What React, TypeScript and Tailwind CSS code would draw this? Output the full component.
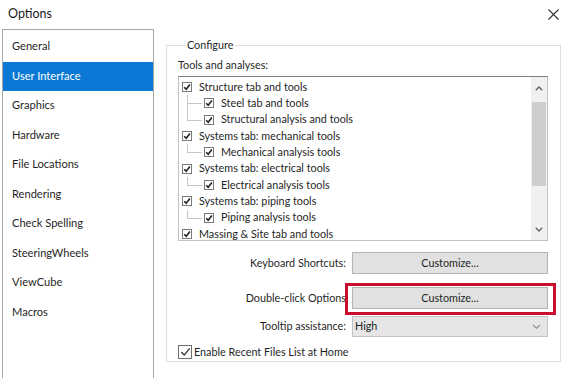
import React from "react";

const font = { fontFamily: 'Lato, "Open Sans", sans-serif' };

const nav = [
  "General",
  "User Interface",
  "Graphics",
  "Hardware",
  "File Locations",
  "Rendering",
  "Check Spelling",
  "SteeringWheels",
  "ViewCube",
  "Macros",
];

type Row = { t: string; child?: boolean; last?: boolean };
const rows: Row[] = [
  { t: "Structure tab and tools" },
  { t: "Steel tab and tools", child: true },
  { t: "Structural analysis and tools", child: true, last: true },
  { t: "Systems tab: mechanical tools" },
  { t: "Mechanical analysis tools", child: true, last: true },
  { t: "Systems tab: electrical tools" },
  { t: "Electrical analysis tools", child: true, last: true },
  { t: "Systems tab: piping tools" },
  { t: "Piping analysis tools", child: true, last: true },
  { t: "Massing & Site tab and tools" },
];

function Check({ size = 10 }: { size?: number }) {
  return (
    <span
      className="flex shrink-0 items-center justify-center border border-[#7a7a7a] bg-white"
      style={{ width: size, height: size }}
    >
      <svg width={size - 2} height={size - 2} viewBox="0 0 8 8">
        <path d="M1.2 4.2 L3.2 6.2 L6.9 1.6" fill="none" stroke="#222" strokeWidth="1.6" />
      </svg>
    </span>
  );
}

export default function App() {
  return (
    <div
      className="relative h-[378px] w-[570px] overflow-hidden bg-white text-[12px] text-[#1f1f1f]"
      style={font}
    >
      {/* Title bar */}
      <div className="flex h-[29px] items-center justify-between pl-[8px] pr-[11px]">
        <span className="text-[12.5px] text-[#1a1a1a]">Options</span>
        <svg width="11" height="11" viewBox="0 0 11 11">
          <path d="M0.5 0.5 L10.5 10.5 M10.5 0.5 L0.5 10.5" stroke="#333" strokeWidth="1.1" />
        </svg>
      </div>

      <div className="flex h-[349px]">
        {/* Left nav */}
        <div className="ml-[2px] h-full w-[152px] border border-b-0 border-[#a9a9a9] pt-[2px]">
          {nav.map((n) => (
            <div
              key={n}
              className={
                "flex h-[29.5px] items-center pl-[9px] text-[11.1px] " +
                (n === "User Interface" ? "bg-[#0a78d4] text-white" : "")
              }
            >
              {n}
            </div>
          ))}
        </div>

        {/* Right side */}
        <div className="ml-[12px] flex-1 pr-[9px] pt-[9px] text-[10.8px]">
          <fieldset className="h-[324px] border border-[#dedede] pl-[11px] pr-[12px]">
            <legend className="ml-[7px] px-[2px] leading-[14px]">Configure</legend>
            <div className="mt-[6px] leading-[14px]">Tools and analyses:</div>

            {/* List box */}
            <div className="relative mt-[4px] h-[165px] overflow-hidden border border-[#c2c2c2] border-t-[#7d7d7d] pt-[2px]">
              {rows.map((r, i) => (
                <div
                  key={i}
                  className={
                    "relative flex h-[16.33px] items-center gap-[7px] " +
                    (r.child ? "pl-[25px]" : "pl-[3px]")
                  }
                >
                  {r.child && (
                    <>
                      <span
                        className="absolute left-[8px] top-0 w-px bg-[#c6c6c6]"
                        style={{ height: r.last ? "50%" : "100%" }}
                      />
                      <span className="absolute left-[8px] top-1/2 h-px w-[15px] bg-[#c6c6c6]" />
                    </>
                  )}
                  <Check />
                  <span className="whitespace-nowrap leading-none">{r.t}</span>
                </div>
              ))}

              {/* Scrollbar */}
              <div className="absolute right-0 top-0 flex h-full w-[16px] flex-col items-center bg-[#f0f0f0]">
                <div className="flex h-[22px] items-center justify-center">
                  <svg width="8" height="5" viewBox="0 0 8 5">
                    <path d="M0.8 4.2 L4 1 L7.2 4.2" fill="none" stroke="#606060" strokeWidth="1.3" />
                  </svg>
                </div>
                <div className="mt-[3px] h-[84px] w-[14px] bg-[#cdcdcd]" />
                <div className="flex-1" />
                <div className="flex h-[20px] items-center justify-center pb-[2px]">
                  <svg width="8" height="5" viewBox="0 0 8 5">
                    <path d="M0.8 0.8 L4 4 L7.2 0.8" fill="none" stroke="#606060" strokeWidth="1.3" />
                  </svg>
                </div>
              </div>
            </div>

            {/* Controls */}
            <div className="mt-[11px] grid grid-cols-[1fr_196px] items-center gap-x-[6px]">
              <div className="text-right leading-none">Keyboard Shortcuts:</div>
              <button className="h-[22px] border border-[#b4b4b4] bg-[#e1e1e1] leading-none">
                Customize...
              </button>

              <div className="mt-[13px] text-right leading-none">Double-click Options</div>
              <div className="relative mt-[13px]">
                <button className="h-[22px] w-full border border-[#b4b4b4] bg-[#e1e1e1] leading-none">
                  Customize...
                </button>
                <div className="pointer-events-none absolute -bottom-[6px] -left-[7px] -right-[8px] -top-[4px] border-[3px] border-[#c8102e]" />
              </div>

              <div className="mt-[7px] text-right leading-none">Tooltip assistance:</div>
              <div className="mt-[7px] flex h-[21px] items-center justify-between border border-[#c4c4c4] bg-[#e6e6e6] pl-[2px] pr-[6px]">
                <span className="leading-none">High</span>
                <svg width="9" height="5" viewBox="0 0 9 5">
                  <path d="M0.8 0.8 L4.5 4.2 L8.2 0.8" fill="none" stroke="#8a8a8a" strokeWidth="1.1" />
                </svg>
              </div>
            </div>

            <div className="mt-[8px] flex items-center gap-[2px]">
              <span className="flex h-[14px] w-[14px] items-center justify-center border border-[#6e6e6e] bg-white">
                <svg width="11" height="10" viewBox="0 0 11 10">
                  <path d="M1.2 5 L4.2 8 L9.8 1.4" fill="none" stroke="#333" strokeWidth="1.2" />
                </svg>
              </span>
              <span className="whitespace-nowrap leading-none">Enable Recent Files List at Home</span>
            </div>
          </fieldset>
        </div>
      </div>
    </div>
  );
}
